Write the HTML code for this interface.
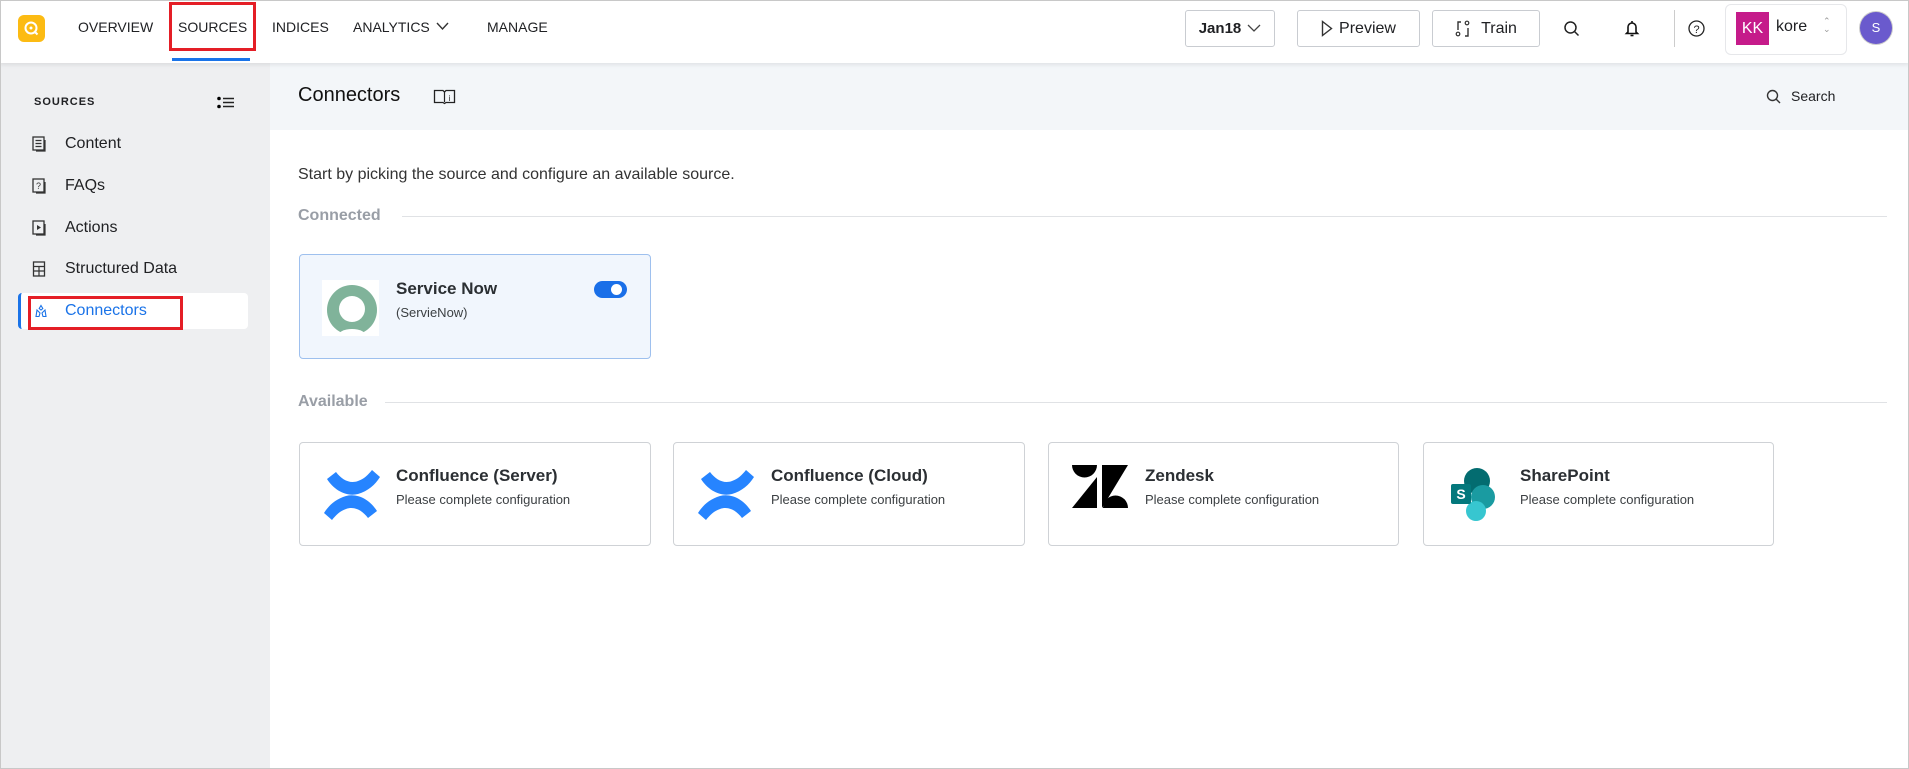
<!DOCTYPE html>
<html><head><meta charset="utf-8"><style>
*{box-sizing:border-box;margin:0;padding:0}
body{width:1909px;height:769px;overflow:hidden;font-family:"Liberation Sans",sans-serif;background:#fff;position:relative;color:#202124}
.a{position:absolute}
.frame{left:0;top:0;width:1909px;height:769px;border:1px solid #c8c8c8;z-index:50;pointer-events:none}
.top{left:0;top:0;width:1909px;height:63px;background:#fff;box-shadow:0 2px 4px rgba(0,0,0,.08);z-index:5}
.nav{top:19px;font-size:14px;color:#202124}
.btn{border:1px solid #c9ccd1;border-radius:3px;background:#fff;font-size:16px;display:flex;align-items:center;justify-content:center;gap:6px}
.side{left:0;top:63px;width:270px;height:706px;background:#eeeff1}
.item{left:65px;font-size:16px;color:#202124}
.ic{left:32px;width:15px;height:16px}
.card{border:1px solid #cfd2d6;border-radius:4px;background:#fff}
.ct{font-size:17px;font-weight:bold;color:#2b2f33}
.cs{font-size:13px;color:#3c4043}
</style></head><body>
<div class="a frame"></div>
<div class="a top">
  <div class="a" style="left:18px;top:15px;width:27px;height:27px;background:#fcbb13;border-radius:6px"></div>
  <svg class="a" style="left:22px;top:19px" width="19" height="19" viewBox="0 0 19 19"><circle cx="9" cy="9" r="5.5" fill="none" stroke="#fff" stroke-width="2"/><path d="M12.5 12.5l3 3" stroke="#fff" stroke-width="2"/><circle cx="9" cy="9" r="1.5" fill="#fff"/></svg>
  <div class="a nav" style="left:78px">OVERVIEW</div>
  <div class="a nav" style="left:178px">SOURCES</div>
  <div class="a" style="left:169px;top:2px;width:87px;height:49px;border:3px solid #e41e26"></div>
  <div class="a" style="left:172px;top:58px;width:78px;height:3px;background:#1a73e8"></div>
  <div class="a nav" style="left:272px">INDICES</div>
  <div class="a nav" style="left:353px">ANALYTICS</div>
  <svg class="a" style="left:436px;top:22px" width="13" height="9"><path d="M1 1l5.5 6 5.5-6" fill="none" stroke="#333" stroke-width="1.4"/></svg>
  <div class="a nav" style="left:487px">MANAGE</div>
  <div class="a btn" style="left:1185px;top:10px;width:90px;height:37px;font-size:15px;font-weight:bold">Jan18 <svg width="14" height="9"><path d="M1 1l6 6 6-6" fill="none" stroke="#444" stroke-width="1.3"/></svg></div>
  <div class="a btn" style="left:1297px;top:10px;width:123px;height:37px"><svg width="12" height="17"><path d="M1.5 1.5v14l9-7z" fill="none" stroke="#333" stroke-width="1.4"/></svg>Preview</div>
  <div class="a btn" style="left:1432px;top:10px;width:108px;height:37px;gap:10px"><svg width="16" height="18"><path d="M6 2H3v8M10 16h3V8" fill="none" stroke="#333" stroke-width="1.4"/><circle cx="12" cy="3" r="1.8" fill="none" stroke="#333" stroke-width="1.2"/><circle cx="3" cy="14" r="1.8" fill="none" stroke="#333" stroke-width="1.2"/></svg>Train</div>
  <svg class="a" style="left:1563px;top:20px" width="18" height="18"><circle cx="7.5" cy="7.5" r="5.5" fill="none" stroke="#222" stroke-width="1.5"/><path d="M11.5 11.5l4 4" stroke="#222" stroke-width="1.5"/></svg>
  <svg class="a" style="left:1624px;top:19px" width="16" height="19"><path d="M8 2v1.5M4 13V8a4 4 0 018 0v5l1.5 1.5h-11z" fill="none" stroke="#111" stroke-width="1.6"/><path d="M6.5 16.5h3" stroke="#111" stroke-width="1.6"/></svg>
  <div class="a" style="left:1674px;top:10px;width:1px;height:37px;background:#ccc"></div>
  <svg class="a" style="left:1687px;top:19px" width="19" height="19"><circle cx="9.5" cy="9.5" r="7.5" fill="none" stroke="#222" stroke-width="1.3"/><text x="9.5" y="14" font-size="11" text-anchor="middle" font-family="Liberation Sans" fill="#222">?</text></svg>
  <div class="a" style="left:1725px;top:4px;width:122px;height:51px;border:1px solid #e6e7ea;border-radius:6px"></div>
  <div class="a" style="left:1736px;top:12px;width:33px;height:33px;background:#c51b8a;color:#fff;font-size:16px;line-height:33px;text-align:center">KK</div>
  <div class="a" style="left:1776px;top:18px;font-size:16px">kore</div>
  <div class="a" style="left:1823px;top:17px;font-size:9px;color:#999;line-height:8px">&#8963;<br>&#8964;</div>
  <div class="a" style="left:1860px;top:12px;width:32px;height:32px;border-radius:50%;background:#6a5acd;color:#fff;font-size:13px;line-height:32px;text-align:center;box-shadow:0 0 0 1px #ccc">S</div>
</div>
<div class="a side">
  <div class="a" style="left:34px;top:33px;font-size:11px;font-weight:bold;letter-spacing:1px">SOURCES</div>
  <svg class="a" style="left:217px;top:33px" width="18" height="14"><circle cx="2" cy="2.5" r="1.8"/><circle cx="2" cy="10.5" r="1.8"/><path d="M6 2.5h11M6 6.5h11M6 10.5h11" stroke="#222" stroke-width="1.5"/></svg>
</div>
<svg class="a ic" style="top:136px" viewBox="0 0 15 16"><rect x="1" y="1" width="11" height="13" fill="none" stroke="#333" stroke-width="1.3"/><path d="M3.5 4.5h6M3.5 7.5h6M3.5 10.5h6M13 4v11H4" fill="none" stroke="#333" stroke-width="1.2"/></svg>
<div class="a item" style="top:135px">Content</div>
<svg class="a ic" style="top:178px" viewBox="0 0 15 16"><rect x="1" y="1" width="11" height="13" fill="none" stroke="#333" stroke-width="1.3"/><text x="6.5" y="11" font-size="9" text-anchor="middle" fill="#333">?</text><path d="M13 4v11H4" fill="none" stroke="#333" stroke-width="1.2"/></svg>
<div class="a item" style="top:177px">FAQs</div>
<svg class="a ic" style="top:220px" viewBox="0 0 15 16"><rect x="1" y="1" width="11" height="13" fill="none" stroke="#333" stroke-width="1.3"/><path d="M5 5v5l4-2.5z" fill="#333"/><path d="M13 4v11H4" fill="none" stroke="#333" stroke-width="1.2"/></svg>
<div class="a item" style="top:219px">Actions</div>
<svg class="a ic" style="top:261px" viewBox="0 0 15 16"><rect x="1.5" y="1" width="11" height="14" fill="none" stroke="#333" stroke-width="1.3"/><path d="M1.5 5.5h11M1.5 10h11M7 5.5v9" stroke="#333" stroke-width="1.2"/></svg>
<div class="a item" style="top:260px">Structured Data</div>
<div class="a" style="left:18px;top:293px;width:230px;height:36px;background:#fff;border-radius:4px;border-left:3px solid #1a73e8"></div>
<svg class="a" style="left:34px;top:304px" width="14" height="14"><path d="M7 1.5l1.8 3-1.8 1.5-1.8-1.5zM3 6l3 3-1 3.5H2zM11 6l-3 3 1 3.5h3z" fill="none" stroke="#1a73e8" stroke-width="1.1"/></svg>
<div class="a item" style="top:302px;color:#1a73e8">Connectors</div>
<div class="a" style="left:28px;top:296px;width:155px;height:34px;border:3px solid #e41e26"></div>
<div class="a" style="left:270px;top:63px;width:1638px;height:67px;background:#f3f6f9"></div>
<div class="a" style="left:298px;top:84px;font-size:20px;color:#111">Connectors</div>
<svg class="a" style="left:433px;top:87px" width="23" height="18"><path d="M1.5 3.5h8.5l1.5 1.5 1.5-1.5h8.5v12h-8.5l-1.5 1-1.5-1H1.5z" fill="none" stroke="#222" stroke-width="1.3"/><path d="M11.5 5v10" stroke="#222" stroke-width="1.2"/><text x="16.5" y="14" font-size="8" text-anchor="middle" fill="#222">i</text></svg>
<svg class="a" style="left:1766px;top:89px" width="16" height="16"><circle cx="6.5" cy="6.5" r="5" fill="none" stroke="#333" stroke-width="1.4"/><path d="M10 10l4 4" stroke="#333" stroke-width="1.4"/></svg>
<div class="a" style="left:1791px;top:88px;font-size:14px">Search</div>
<div class="a" style="left:298px;top:166px;font-size:16px;color:#333">Start by picking the source and configure an available source.</div>
<div class="a" style="left:298px;top:207px;font-size:16px;font-weight:bold;color:#999ea6">Connected</div>
<div class="a" style="left:402px;top:216px;width:1485px;height:1px;background:#e0e2e5"></div>
<div class="a" style="left:299px;top:254px;width:352px;height:105px;background:#f1f6fd;border:1px solid #9ec0ee;border-radius:4px"></div>
<div class="a" style="left:322px;top:280px;width:57px;height:56px;background:#fff"></div>
<svg class="a" style="left:322px;top:280px" width="57" height="56"><circle cx="30" cy="30" r="25" fill="#80b39a"/><circle cx="30" cy="29" r="13" fill="#fff"/><ellipse cx="30" cy="56" rx="14" ry="7" fill="#fff"/></svg>
<div class="a ct" style="left:396px;top:279px">Service Now</div>
<div class="a cs" style="left:396px;top:305px">(ServieNow)</div>
<div class="a" style="left:594px;top:281px;width:33px;height:17px;border-radius:9px;background:#1a6fe8"></div>
<div class="a" style="left:611px;top:284px;width:11px;height:11px;border-radius:50%;background:#fff"></div>
<div class="a" style="left:298px;top:393px;font-size:16px;font-weight:bold;color:#999ea6">Available</div>
<div class="a" style="left:385px;top:402px;width:1502px;height:1px;background:#e0e2e5"></div>

<div class="a card" style="left:299px;top:442px;width:352px;height:104px"></div>
<div class="a card" style="left:673px;top:442px;width:352px;height:104px"></div>
<div class="a card" style="left:1048px;top:442px;width:351px;height:104px"></div>
<div class="a card" style="left:1423px;top:442px;width:351px;height:104px"></div>

<svg class="a" style="left:323px;top:466px" width="58" height="58" viewBox="0 0 58 58"><path d="M4 13l9-7c6 8 14 12 22 9 6-2 10-6 14-11l8 7c-5 8-12 14-22 17-12 3-24-4-31-15z" fill="#2684ff"/><path d="M54 45l-9 7c-6-8-14-12-22-9-6 2-10 6-14 11l-8-7c5-8 12-14 22-17 12-3 24 4 31 15z" fill="#2684ff"/></svg>
<svg class="a" style="left:697px;top:466px" width="58" height="58" viewBox="0 0 58 58"><path d="M4 13l9-7c6 8 14 12 22 9 6-2 10-6 14-11l8 7c-5 8-12 14-22 17-12 3-24-4-31-15z" fill="#2684ff"/><path d="M54 45l-9 7c-6-8-14-12-22-9-6 2-10 6-14 11l-8-7c5-8 12-14 22-17 12-3 24 4 31 15z" fill="#2684ff"/></svg>
<svg class="a" style="left:1072px;top:465px" width="56" height="44" viewBox="0 0 56 44"><path d="M0 0h25a12.5 12.5 0 01-25 0z" fill="#000"/><path d="M30 0h26L30 43z" fill="#000"/><path d="M25 12v31H0z" fill="#000"/><path d="M31 43a12.5 12.5 0 0125 0z" fill="#000"/></svg>
<svg class="a" style="left:1449px;top:466px" width="52" height="56"><circle cx="28" cy="15" r="13" fill="#036c70"/><circle cx="34" cy="31" r="12" fill="#1a9ba1"/><circle cx="27" cy="45" r="10" fill="#37c6d0"/><rect x="2" y="18" width="20" height="20" rx="2" fill="#03787c"/><text x="12" y="33" font-size="14" font-weight="bold" text-anchor="middle" fill="#fff" font-family="Liberation Sans">S</text></svg>

<div class="a ct" style="left:396px;top:466px">Confluence (Server)</div>
<div class="a cs" style="left:396px;top:492px">Please complete configuration</div>
<div class="a ct" style="left:771px;top:466px">Confluence (Cloud)</div>
<div class="a cs" style="left:771px;top:492px">Please complete configuration</div>
<div class="a ct" style="left:1145px;top:466px">Zendesk</div>
<div class="a cs" style="left:1145px;top:492px">Please complete configuration</div>
<div class="a ct" style="left:1520px;top:466px">SharePoint</div>
<div class="a cs" style="left:1520px;top:492px">Please complete configuration</div>
</body></html>
